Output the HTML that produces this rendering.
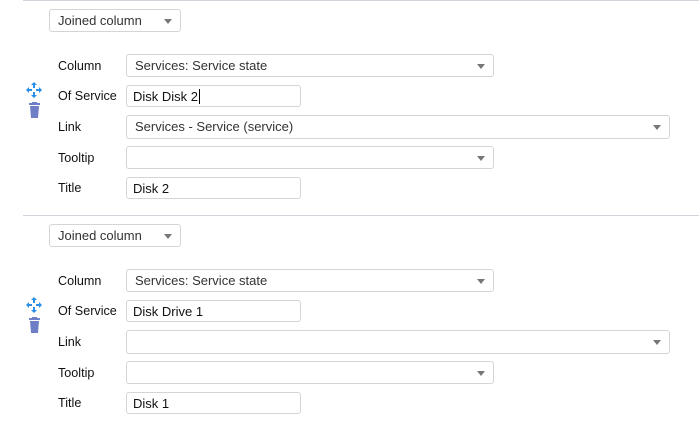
<!DOCTYPE html>
<html><head><style>
body{margin:0;width:699px;height:425px;background:#fff;font-family:"Liberation Sans",sans-serif;font-size:12px;color:#222;position:relative;overflow:hidden}
.hr{position:absolute;left:23px;right:0;height:1px;background:#d4d4dc}
.box{position:absolute;box-sizing:border-box;border:1px solid #d5d5d5;border-radius:3px;background:#fff;padding-left:8px;line-height:22px;color:#333;font-size:13px}
.sel::after{content:"";position:absolute;right:8px;top:9px;border-left:4px solid transparent;border-right:4px solid transparent;border-top:5px solid #777}
.inp{padding-left:6px;color:#111;line-height:21px}
.lbl{position:absolute;left:58px;font-size:12.6px;color:#111}
.ic{position:absolute}
</style></head><body>
<div class="hr" style="top:0"></div>
<div class="hr" style="top:215px"></div>

<div class="box sel" style="left:49px;top:9px;width:132px;height:23px">Joined column</div>
<div class="lbl" style="top:59px">Column</div>
<div class="box sel" style="left:126px;top:54px;width:368px;height:23px">Services: Service state</div>
<div class="lbl" style="top:89px">Of Service</div>
<div class="box inp" style="left:126px;top:85px;width:175px;height:22px">Disk Disk 2<span style="border-left:1px solid #000;margin-left:1px"></span></div>
<div class="lbl" style="top:120px">Link</div>
<div class="box sel" style="left:126px;top:115px;width:544px;height:24px">Services - Service (service)</div>
<div class="lbl" style="top:151px">Tooltip</div>
<div class="box sel" style="left:126px;top:146px;width:368px;height:23px"></div>
<div class="lbl" style="top:181px">Title</div>
<div class="box inp" style="left:126px;top:177px;width:175px;height:22px">Disk 2</div>

<div class="box sel" style="left:49px;top:224px;width:132px;height:23px">Joined column</div>
<div class="lbl" style="top:274px">Column</div>
<div class="box sel" style="left:126px;top:269px;width:368px;height:23px">Services: Service state</div>
<div class="lbl" style="top:304px">Of Service</div>
<div class="box inp" style="left:126px;top:300px;width:175px;height:22px">Disk Drive 1</div>
<div class="lbl" style="top:335px">Link</div>
<div class="box sel" style="left:126px;top:330px;width:544px;height:24px"></div>
<div class="lbl" style="top:366px">Tooltip</div>
<div class="box sel" style="left:126px;top:361px;width:368px;height:23px"></div>
<div class="lbl" style="top:396px">Title</div>
<div class="box inp" style="left:126px;top:392px;width:175px;height:22px">Disk 1</div>

<svg class="ic" style="left:24px;top:81px" width="20" height="40" viewBox="0 0 20 40">
<g fill="#2b8fe8"><path d="M10 1l3 3h-2v3h-2V4H7z"/><path d="M10 17l3-3h-2v-3h-2v3H7z"/><path d="M2 9l3-3v2h3v2H5v2z"/><path d="M18 9l-3-3v2h-3v2h3v2z"/></g>
<g fill="#6e7fc8"><rect x="5" y="22" width="11" height="2" rx="0.5"/><rect x="8" y="21" width="5" height="2"/><path d="M6 25h9l-1 12H7z"/></g>
</svg>
<svg class="ic" style="left:24px;top:296px" width="20" height="40" viewBox="0 0 20 40">
<g fill="#2b8fe8"><path d="M10 1l3 3h-2v3h-2V4H7z"/><path d="M10 17l3-3h-2v-3h-2v3H7z"/><path d="M2 9l3-3v2h3v2H5v2z"/><path d="M18 9l-3-3v2h-3v2h3v2z"/></g>
<g fill="#6e7fc8"><rect x="5" y="22" width="11" height="2" rx="0.5"/><rect x="8" y="21" width="5" height="2"/><path d="M6 25h9l-1 12H7z"/></g>
</svg>
</body></html>
